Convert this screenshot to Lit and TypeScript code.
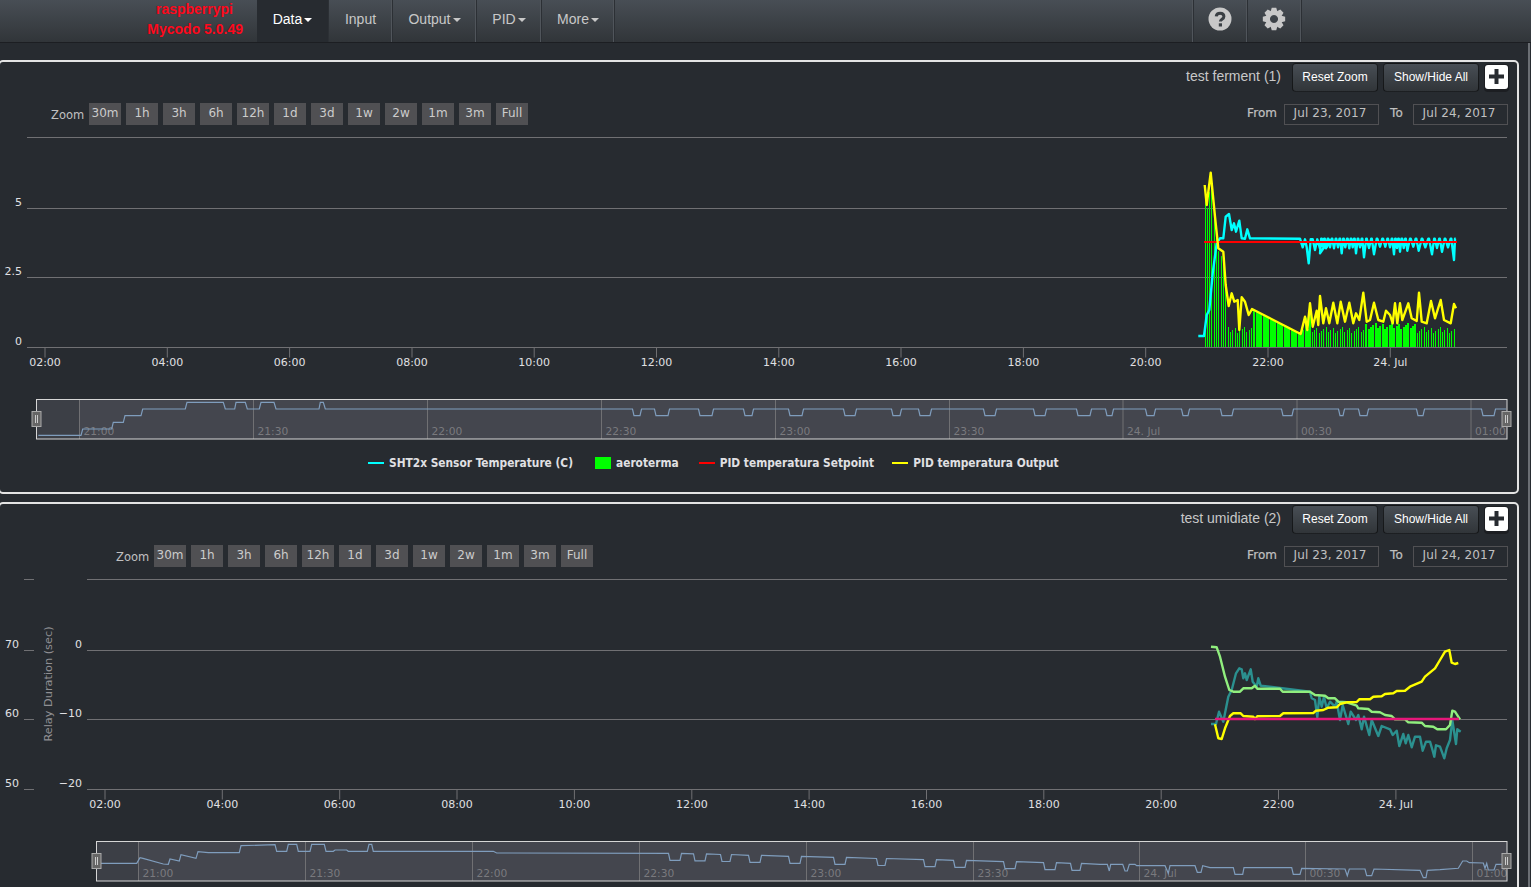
import { LitElement, html, css, svg } from 'lit';
import { customElement, property } from 'lit/decorators.js';

type Pt = [number, number];

interface Series {
  color: string;
  width: number;
  pts: Pt[];
}

interface ChartConfig {
  title: string;
  zoomLeft: number;
  plotLeft: number;
  top: number;
  yLabels: [string, number][];
  xLabels: [string, number][];
  navX: number;
  navLines: number[];
  navLabels: string[];
  navLine: Pt[];
  series: Series[];
  bars?: { x: number; top: number; w: number }[];
  legend?: boolean;
}

// zoomed crops are 3x, so this turns crop coords into page coords
const fromCrop = (ox: number, oy: number, list: number[][]): Pt[] =>
  list.map(([x, y]) => [ox + x / 3, oy + y / 3] as Pt);

const toPath = (pts: Pt[]) =>
  pts.map((p, i) => `${i ? 'L' : 'M'}${p[0].toFixed(1)} ${p[1].toFixed(1)}`).join(' ');

const yellowOne: Pt[] = [
  ...fromCrop(1190, 160, [
    [44, 75], [50, 135], [62, 38], [75, 170], [85, 265], [100, 275], [107, 375], [116, 438],
    [125, 400], [133, 425], [143, 420], [148, 510], [155, 412], [165, 425], [176, 465],
    [186, 447], [332, 522], [345, 470], [352, 510], [360, 430], [368, 500], [380, 452],
    [385, 495],
  ]),
  ...fromCrop(1320, 220, [
    [0, 228], [10, 310], [18, 265], [28, 310], [40, 248], [52, 310], [62, 245], [75, 305],
    [88, 248], [100, 310], [108, 280], [118, 300], [130, 218], [140, 305], [150, 300],
    [162, 248], [175, 300], [190, 305], [198, 272], [210, 285], [218, 310], [225, 250],
    [232, 310], [240, 250], [247, 300], [265, 250], [275, 295], [290, 303], [297, 218],
    [305, 305], [320, 310], [333, 243], [345, 295], [362, 240], [372, 300], [392, 310],
    [402, 252], [408, 265],
  ]),
];

const dips = [
  [0, 100], [9, 80], [18, 85], [30, 82], [42, 85], [54, 82], [65, 100], [76, 82], [88, 85], [98, 82],
  [108, 100], [120, 82], [132, 112], [147, 84], [162, 103], [180, 80], [196, 80], [210, 82],
  [222, 103], [231, 84], [240, 95], [251, 84], [262, 92], [280, 80], [296, 92], [316, 82], [336, 103],
  [351, 84], [366, 95], [384, 82], [402, 120],
];

// zigzag: a top point half way between each pair of dips
const cyanOne: Pt[] = [
  ...fromCrop(1190, 160, [
    [25, 528], [42, 528], [50, 465], [58, 450], [68, 340], [80, 250], [90, 235], [100, 235],
    [107, 170], [117, 162], [125, 210], [132, 190], [138, 215], [148, 182], [155, 235],
    [165, 236], [172, 208], [180, 235], [330, 236], [338, 262], [345, 238], [350, 262],
    [356, 310], [362, 238], [368, 238], [375, 270], [382, 238], [390, 265], [398, 238],
    [410, 262], [418, 240],
  ]),
  ...fromCrop(
    1320,
    220,
    dips
      .flatMap(([x, y], i) => {
        const next = dips[i + 1] ? dips[i + 1][0] : 410;
        return [[x, y], [(x + next) / 2 - 1, 56], [(x + next) / 2 + 1, 56]];
      })
  ),
];

const yAt = (pts: Pt[], x: number) => {
  for (let i = 1; i < pts.length; i++) {
    if (pts[i][0] >= x) {
      const [a, b] = [pts[i - 1], pts[i]];
      return a[1] + ((b[1] - a[1]) * (x - a[0])) / (b[0] - a[0] || 1);
    }
  }
  return pts[pts.length - 1][1];
};

const barsOne = Array.from({ length: 108 }, (_, i) => {
  const x = Math.round(1204.5 + i * 2.33);
  const line = yAt(yellowOne, x);
  const dense = (x > 1252 && x < 1311) || (x > 1363 && x < 1416);
  const height = (dense ? 18 : 14) + ((i * 37) % 7);
  let top = Math.max(line + 1, 347 - height);
  if (x < 1228) top = line + 6;
  if (dense && x < 1311) top = line + 1;
  return { x, top, w: dense ? 2 : 1 };
});

const navOne: Pt[] = [
  [38.3, 435.3], [81, 435.3], [82.7, 429], [111.7, 429], [113.3, 422.3], [123.3, 422.3], [125, 415.7],
  [141, 415.7], [142.7, 409], [185.3, 409], [187, 402.3], [223.3, 402.3], [225.3, 409], [234.7, 409],
  [236, 402.3], [245.3, 402.3], [247.3, 409], [259.3, 409], [261, 402.3], [274, 402.3], [276, 409],
  [319, 409], [320.3, 402.3], [323.3, 402.3], [325.3, 409],
  ...[
    [634, 640], [656, 668], [700, 712], [745, 752], [790, 802], [845, 855], [893, 900], [920, 930],
    [985, 995], [1035, 1045], [1078, 1090], [1107, 1112], [1147, 1154], [1183, 1188], [1222, 1232],
    [1283, 1292], [1340, 1343], [1360, 1367], [1418, 1423], [1483, 1494],
  ].flatMap(([a, b]): Pt[] => [[a - 1.5, 409], [a, 415.7], [b, 415.7], [b + 1.5, 409]]),
  [1506, 409],
];

const navTwo: Pt[] = [
  [100.7, 863.3], [136.7, 863.3], [140, 857.7], [143, 858.3], [163.3, 864], [168.3, 864.3], [170, 859],
  [179.3, 861], [181, 854.7], [196, 858.3], [198, 851.7], [208.3, 852.7], [239.3, 852.7], [241, 845.7],
  [275, 844.7], [276.7, 851.3], [286.7, 851.3], [288.3, 844.3], [296.7, 844.3], [298.3, 851.3], [310, 851.3],
  [311.7, 844.3], [324.3, 844.3], [326, 851.3], [333.3, 851.3], [335, 850], [346.7, 850], [348.3, 851.3],
  [367.3, 851.3], [369, 844.3], [371.7, 844.3], [373.3, 851.3], [493.3, 851.3], [496.7, 853],
  ...[
    [670, 680], [695, 705], [722, 730], [750, 760], [790, 800], [835, 845], [878, 885], [925, 935],
    [955, 965], [1005, 1015], [1045, 1055], [1072, 1080],
  ].flatMap(([a, b]): Pt[] => {
    const base = 853 + ((a - 660) / 440) * 11;
    return [[a - 1.5, base], [a, base + 7], [b, base + 7], [b + 1.5, base]];
  }),
  ...fromCrop(1100, 835, [
    [0, 88], [22, 88], [28, 108], [32, 88], [68, 88], [75, 108], [82, 108], [88, 88], [105, 88], [110, 92],
    [195, 92], [205, 115], [210, 92], [285, 92], [292, 112], [303, 112], [308, 92], [330, 98], [400, 98],
    [405, 118], [428, 118], [432, 98], [575, 98], [580, 118], [600, 118], [605, 100], [735, 102], [742, 122],
    [748, 102], [795, 102], [800, 122], [815, 122], [822, 102], [960, 106], [970, 128], [978, 128], [982, 106],
    [1020, 104], [1075, 100], [1088, 78], [1100, 78], [1108, 83], [1150, 84], [1155, 100], [1160, 85],
    [1165, 105], [1182, 105], [1188, 88], [1220, 88],
  ]),
];

const CHARTS: ChartConfig[] = [
  {
    title: 'test ferment (1)',
    zoomLeft: 51,
    plotLeft: 27,
    top: 130,
    yLabels: [['5', 208], ['2.5', 277], ['0', 347]],
    xLabels: [
      ['02:00', 45], ['04:00', 167.3], ['06:00', 289.6], ['08:00', 412], ['10:00', 534.2], ['12:00', 656.5],
      ['14:00', 778.8], ['16:00', 901], ['18:00', 1023.4], ['20:00', 1145.7], ['22:00', 1268], ['24. Jul', 1390.3],
    ],
    navX: 36.5,
    navLines: [79, 253, 427, 601, 775, 949, 1122.5, 1296.5, 1470.5],
    navLabels: ['21:00', '21:30', '22:00', '22:30', '23:00', '23:30', '24. Jul', '00:30', '01:00'],
    navLine: navOne,
    bars: barsOne,
    legend: true,
    series: [
      { color: '#00ffff', width: 2.4, pts: cyanOne },
      { color: '#ff0000', width: 2, pts: [[1204, 242], [1457, 242]] },
      { color: '#ffff00', width: 2.4, pts: yellowOne },
    ],
  },
  {
    title: 'test umidiate (2)',
    zoomLeft: 116,
    plotLeft: 87,
    top: 572,
    yLabels: [['0', 650], ['\u221210', 719], ['\u221220', 789]],
    xLabels: [
      ['02:00', 105], ['04:00', 222.3], ['06:00', 339.7], ['08:00', 457], ['10:00', 574.4], ['12:00', 691.8],
      ['14:00', 809.1], ['16:00', 926.5], ['18:00', 1043.8], ['20:00', 1161.2], ['22:00', 1278.5], ['24. Jul', 1395.9],
    ],
    navX: 96.5,
    navLines: [138, 305, 472, 639, 806, 973, 1139, 1305, 1472],
    navLabels: ['21:00', '21:30', '22:00', '22:30', '23:00', '23:30', '24. Jul', '00:30', '01:00'],
    navLine: navTwo,
    series: [
      {
        color: '#2b908f',
        width: 2.4,
        pts: fromCrop(1200, 640, [
          [33, 252], [48, 252], [57, 215], [70, 245], [85, 170], [95, 150], [108, 100], [118, 85], [125, 88],
          [130, 115], [135, 100], [140, 120], [152, 88], [158, 125], [170, 140], [175, 115], [182, 137], [330, 155],
          [335, 175], [345, 180], [352, 232], [358, 170], [365, 200], [372, 170], [380, 205], [390, 185], [405, 200],
          [410, 185], [420, 240], [428, 195], [445, 252], [452, 215], [468, 240], [475, 225], [485, 268], [492, 230],
          [508, 285], [515, 240], [535, 288], [545, 258], [570, 268], [578, 285], [590, 272], [598, 318], [610, 282],
          [617, 310], [625, 285], [635, 322], [645, 290], [660, 290], [668, 332], [678, 305], [690, 305], [695, 322],
          [703, 350], [708, 316], [720, 320], [733, 355], [740, 325], [750, 300], [757, 240], [768, 312], [772, 268],
          [782, 275],
        ]),
      },
      {
        color: '#90ee7e',
        width: 2.4,
        pts: fromCrop(1200, 640, [
          [33, 20], [50, 22], [60, 50], [75, 110], [88, 150], [100, 155], [120, 155], [130, 145], [155, 145], [165, 137],
          [172, 146], [240, 146], [248, 155], [330, 155], [345, 165], [375, 167], [385, 175], [405, 175], [415, 185],
          [440, 187], [470, 197], [475, 205], [505, 207], [515, 215], [540, 217], [555, 225], [575, 228], [585, 238],
          [615, 238], [625, 247], [665, 248], [675, 258], [700, 260], [712, 268], [738, 268], [750, 255], [757, 212],
          [765, 215], [780, 238],
        ]),
      },
      {
        color: '#ffff00',
        width: 2.4,
        pts: fromCrop(1200, 640, [
          [45, 253], [55, 295], [65, 297], [75, 265], [90, 228], [100, 220], [122, 220], [130, 228], [160, 230],
          [165, 237], [172, 229], [240, 228], [250, 220], [340, 219], [348, 212], [370, 210], [385, 203], [410, 202],
          [420, 192], [440, 187], [470, 186], [478, 178], [510, 178], [520, 170], [545, 169], [555, 162], [580, 160],
          [590, 153], [615, 152], [630, 140], [665, 125], [675, 110], [705, 85], [720, 60], [735, 35], [748, 30],
          [755, 68], [765, 72], [775, 69],
        ]),
      },
      { color: '#e6177a', width: 2.4, pts: [[1215, 719], [1459, 719]] },
    ],
  },
];

const ZOOMS = ['30m', '1h', '3h', '6h', '12h', '1d', '3d', '1w', '2w', '1m', '3m', 'Full'];

const LEGEND = [
  { name: 'SHT2x Sensor Temperature (C)', color: '#00ffff' },
  { name: 'aeroterma', color: '#00ff00', box: true },
  { name: 'PID temperatura Setpoint', color: '#ff0000' },
  { name: 'PID temperatura Output', color: '#ffff00' },
];

@customElement('stock-chart')
class StockChart extends LitElement {
  @property({ attribute: false }) config!: ChartConfig;

  static styles = css`
    :host {
      display: block;
    }
    .panel {
      margin-left: -2px;
      width: 1517px;
      height: 430px;
      border: 2px solid #e4e4e4;
      border-radius: 5px;
      overflow: hidden;
      font-family: 'DejaVu Sans', sans-serif;
    }
    .head {
      display: flex;
      justify-content: flex-end;
      align-items: center;
      height: 30px;
      padding-right: 8px;
      font-family: 'Liberation Sans', sans-serif;
    }
    .title {
      font-size: 14px;
      color: #c8c8c8;
      margin-right: 11px;
      margin-top: -2px;
    }
    .btn {
      box-sizing: border-box;
      height: 29px;
      padding: 0;
      margin-right: 5px;
      border: 1px solid rgba(0, 0, 0, 0.6);
      border-radius: 4px;
      background: linear-gradient(#484e55, #3a3f44 60%, #313539);
      color: #fff;
      font: 12px 'Liberation Sans', sans-serif;
    }
    .reset {
      width: 86px;
    }
    .toggle {
      width: 96px;
    }
    .plus {
      box-sizing: border-box;
      width: 25px;
      height: 28px;
      margin-top: 1px;
      padding: 1px 1px 3px;
      background: #1c1e22;
      border-radius: 4px;
    }
    .plus div {
      height: 100%;
      background: #fff;
      border-radius: 3px;
      display: flex;
      align-items: center;
      justify-content: center;
    }
    .range {
      display: flex;
      align-items: center;
      justify-content: space-between;
      height: 22px;
      margin-top: 11px;
      padding-right: 9px;
      font-size: 12px;
    }
    .zooms {
      display: flex;
      align-items: center;
      gap: 5px;
      color: #c0c0c0;
    }
    .zooms span {
      width: 33px;
      font-size: 11.5px;
      margin-top: 2px;
    }
    .zooms button {
      width: 32px;
      height: 22px;
      padding: 0 0 3px;
      border: 0;
      background: #505053;
      color: #cccccc;
      font: 12px 'DejaVu Sans', sans-serif;
    }
    .dates {
      display: flex;
      align-items: center;
      color: #c0c0c0;
      font-size: 12px;
    }
    .dates label {
      width: 30px;
      margin-right: 7px;
      margin-bottom: 2px;
      letter-spacing: 0.1px;
      -webkit-text-stroke: 0.2px #c0c0c0;
    }
    .dates label.to {
      width: 15px;
      margin: 0 8px 2px 11px;
    }
    .date {
      box-sizing: border-box;
      width: 95px;
      height: 21px;
      padding-right: 3px;
      border: 1px solid #505053;
      color: #c0c0c0;
      text-align: center;
      line-height: 17px;
      letter-spacing: 0.1px;
      font-size: 12px;
    }
    svg.plot {
      display: block;
      margin-top: 5px;
      width: 1517px;
      height: 320px;
    }
    svg text {
      font-family: 'DejaVu Sans', sans-serif;
      font-size: 11px;
      fill: #e0e0e3;
    }
    svg text.nav {
      fill: #7a7a7e;
      font-size: 10.7px;
    }
    svg text.axis {
      fill: #8f8f93;
      font-size: 11.3px;
    }
    .legend {
      display: flex;
      justify-content: flex-start;
      height: 26px;
      padding-left: 368px;
      color: #e0e0e3;
      font: 700 11.8px 'DejaVu Sans Condensed', 'DejaVu Sans', sans-serif;
      align-items: center;
    }
    .item {
      display: flex;
      align-items: center;
      gap: 5px;
      margin-right: 20px;
    }
    .item:first-child {
      margin-right: 22px;
    }
    .item:nth-child(3) {
      margin-right: 18px;
    }
    .swatch {
      width: 16px;
      height: 2px;
    }
    .swatch.box {
      height: 12px;
    }
  `;

  private renderNav(c: ChartConfig) {
    const y = c.top + 269.5;
    const end = 1507;
    const handle = (x: number) => svg`
      <rect x=${x - 4.5} y=${y + 12} width="9" height="15" fill="#666" stroke="#aaa"></rect>
      <path d="M${x - 1} ${y + 15.5}v8M${x + 1} ${y + 15.5}v8" stroke="#ccc"></path>`;
    return svg`
      <rect x=${c.navX} y=${y} width=${c.navLines[0] - c.navX} height="39.5" fill="#3c3f46"></rect>
      <rect x=${c.navLines[0]} y=${y} width=${end - c.navLines[0]} height="39.5" fill="#44464e"></rect>
      ${c.navLines.map(
        (x, i) => svg`
          <path d="M${x + 0.5} ${y}v39.5" stroke="#707073"></path>
          <text class="nav" x=${x + 4.5} y=${y + 35.5}>${c.navLabels[i]}</text>`
      )}
      <path d=${toPath(c.navLine)} fill="none" stroke="#7f9dbd" stroke-width="1.2"></path>
      <rect x=${c.navX} y=${y} width=${end - c.navX} height="39.5" fill="none" stroke="#d6d6d6"></rect>
      ${handle(c.navX)} ${handle(end - 0.5)}`;
  }

  private renderPlot(c: ChartConfig) {
    const base = c.top + 217;
    const grid = [c.top + 7, ...c.yLabels.map((l) => l[1])];
    return svg`
      ${grid.map((y) => svg`<path d="M${c.plotLeft} ${y + 0.5}H1507" stroke="#707073"></path>`)}
      ${c.yLabels.map(
        ([t, y]) => svg`<text x=${c.plotLeft - 5} y=${y - 2} text-anchor="end">${t}</text>`
      )}
      ${c.xLabels.map(
        ([t, x]) => svg`
          <path d="M${x} ${base + 0.5}v10" stroke="#707073"></path>
          <text x=${x} y=${base + 19} text-anchor="middle">${t}</text>`
      )}
      ${(c.bars ?? []).map(
        (b) => svg`<rect x=${b.x} y=${b.top} width=${b.w} height=${347 - b.top} fill="#00ff00"></rect>`
      )}
      ${c.series.map(
        (s) => svg`<path d=${toPath(s.pts)} fill="none" stroke=${s.color} stroke-width=${s.width}
          stroke-linejoin="round"></path>`
      )}`;
  }

  private renderOuterAxis(c: ChartConfig) {
    // second chart has a relay axis left of the main one
    if (c.legend) return null;
    const rows: [string, number][] = [['', 579], ['70', 650], ['60', 719], ['50', 789]];
    return svg`
      ${rows.map(
        ([t, y]) => svg`
          <path d="M24 ${y + 0.5}H34" stroke="#707073"></path>
          <text x="19" y=${y - 2} text-anchor="end">${t}</text>`
      )}
      <text class="axis" transform="translate(52 684) rotate(-90)" text-anchor="middle">Relay Duration (sec)</text>`;
  }

  render() {
    const c = this.config;
    return html`
      <div class="panel">
        <div class="head">
          <span class="title">${c.title}</span>
          <button class="btn reset">Reset Zoom</button>
          <button class="btn toggle">Show/Hide All</button>
          <div class="plus">
            <div>
              <svg width="17" height="17" viewBox="0 0 17 17">
                <path d="M8.5 1v15M1 8.5h15" stroke="#272b30" stroke-width="4"></path>
              </svg>
            </div>
          </div>
        </div>
        <div class="range">
          <div class="zooms" style="margin-left:${c.zoomLeft}px">
            <span>Zoom</span>
            ${ZOOMS.map((z) => html`<button>${z}</button>`)}
          </div>
          <div class="dates">
            <label>From</label>
            <div class="date">Jul 23, 2017</div>
            <label class="to">To</label>
            <div class="date">Jul 24, 2017</div>
          </div>
        </div>
        <svg class="plot" viewBox="0 ${c.top} 1517 320">
          ${this.renderOuterAxis(c)} ${this.renderPlot(c)} ${this.renderNav(c)}
        </svg>
        ${c.legend
          ? html`<div class="legend">
              ${LEGEND.map(
                (l) => html`<div class="item">
                  <div
                    class="swatch ${l.box ? 'box' : ''}"
                    style="background:${l.color}"
                  ></div>
                  ${l.name}
                </div>`
              )}
            </div>`
          : null}
      </div>
    `;
  }
}

@customElement('app-root')
class AppRoot extends LitElement {
  static styles = css`
    :host {
      display: block;
      height: 887px;
      overflow: hidden;
      background: #272b30;
    }
    nav {
      display: flex;
      height: 42px;
      border-bottom: 1px solid #1c1e22;
      background: linear-gradient(#484e55, #3a3f44 60%, #313539);
      font: 14px 'Liberation Sans', sans-serif;
      color: #c8c8c8;
    }
    .brand {
      width: 257px;
      box-sizing: border-box;
      padding: 0 14px 0 0;
      display: flex;
      flex-direction: column;
      align-items: flex-end;
      color: #ff0a1e;
      font-weight: 700;
      line-height: 20px;
      margin-top: -1px;
      text-shadow: 0 0 1px rgba(0, 0, 0, 0.3);
    }
    .brand span:first-child {
      margin-right: 10px;
    }
    .tab {
      display: flex;
      align-items: center;
      justify-content: center;
      box-sizing: border-box;
      border-right: 1px solid #2c3035;
      box-shadow: inset -1px 0 0 #50555b;
      padding-bottom: 4px;
    }
    .tab.on {
      background: #272b30;
      color: #fff;
      box-shadow: none;
    }
    .caret {
      margin-left: 2px;
      border-top: 4px solid currentColor;
      border-left: 4px solid transparent;
      border-right: 4px solid transparent;
      margin-top: 2px;
    }
    .space {
      flex: 1;
      border-right: 1px solid #2c3035;
      box-shadow: inset -1px 0 0 #50555b;
    }
    main {
      padding-top: 17px;
      display: flex;
      flex-direction: column;
      gap: 8px;
      width: 1528px;
      border-right: 2px solid #6b6f74;
    }
    .icon {
      width: 54px;
      display: flex;
      align-items: center;
      justify-content: center;
      box-sizing: border-box;
      border-right: 1px solid #2c3035;
      box-shadow: inset -1px 0 0 #50555b;
      padding: 0 2px 5px 0;
    }
    .rest {
      width: 229px;
    }
  `;

  render() {
    const tabs: [string, number, boolean][] = [
      ['Data', 72, true],
      ['Input', 64, false],
      ['Output', 84, true],
      ['PID', 65, true],
      ['More', 73, true],
    ];
    // gear teeth as one polygon around the centre
    const gear = Array.from({ length: 8 }, (_, i) => {
      const a = (i * Math.PI) / 4;
      const pt = (r: number, d: number) =>
        `${(12 + r * Math.sin(a + d)).toFixed(2)} ${(12 - r * Math.cos(a + d)).toFixed(2)}`;
      return `${pt(8.2, -0.42)} L${pt(11.4, -0.2)} L${pt(11.4, 0.2)} L${pt(8.2, 0.42)}`;
    });
    return html`
      <nav>
        <div class="brand">
          <span>raspberrypi</span>
          <span>Mycodo 5.0.49</span>
        </div>
        ${tabs.map(
          ([name, w, caret], i) => html`<div
            class="tab ${i === 0 ? 'on' : ''}"
            style="width:${w}px"
          >
            ${name}${caret ? html`<span class="caret"></span>` : null}
          </div>`
        )}
        <div class="space"></div>
        <div class="icon">
          <svg width="24" height="24" viewBox="0 0 24 24">
            <circle cx="12" cy="12" r="11.5" fill="#c8c8c8"></circle>
            <path
              d="M8.2 9.4c.3-2 1.8-3.1 3.9-3.1s3.8 1.2 3.8 3.2c0 2.800-3.500 2.700-3.500 5"
              fill="none"
              stroke="#3a3f44"
              stroke-width="3"
            ></path>
            <rect x="10.800" y="16.300" width="3.200" height="3.200" fill="#3a3f44"></rect>
          </svg>
        </div>
        <div class="icon">
          <svg width="24" height="24" viewBox="0 0 24 24">
            <path
              fill-rule="evenodd"
              fill="#c8c8c8"
              d="M${gear.join(' L')} Z M12 8a4 4 0 1 0 .01 0Z"
            ></path>
          </svg>
        </div>
        <div class="rest"></div>
      </nav>
      <main>
        ${CHARTS.map((c) => html`<stock-chart .config=${c}></stock-chart>`)}
      </main>
    `;
  }
}
